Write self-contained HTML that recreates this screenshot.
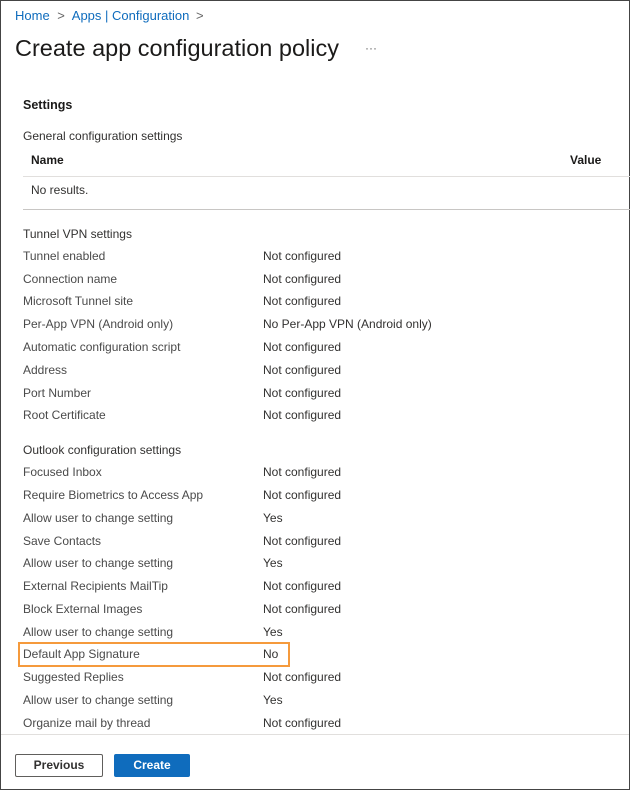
<!DOCTYPE html>
<html><head><meta charset="utf-8"><style>
*{margin:0;padding:0;box-sizing:border-box}
body{width:630px;height:790px;background:#fff;font-family:"Liberation Sans",sans-serif;position:relative;overflow:hidden;}
.t{position:absolute;font-size:12px;line-height:14px;white-space:nowrap;color:#323130}
.l{color:#4a4a4a}
.h{color:#1b1a19}
.ln{position:absolute;height:1px;background:#e1dfdd}
</style></head><body>
<div style="position:absolute;left:0;top:0;width:630px;height:790px;border:1px solid #444;pointer-events:none"></div>
<div class="t" style="left:15px;top:9px;font-size:13px;color:#0f6cbd">Home <span style="color:#666;margin:0 4px">&gt;</span> Apps | Configuration <span style="color:#666;margin-left:3px">&gt;</span></div>
<div class="t h" style="left:15px;top:34px;font-size:23.5px;line-height:28px">Create app configuration policy</div>
<div class="t" style="left:365px;top:41px;color:#666">···</div>
<div class="t h" style="left:23px;top:98px;font-size:12.5px;font-weight:bold">Settings</div>
<div class="t" style="left:23px;top:129px">General configuration settings</div>
<div class="t h" style="left:31px;top:153px;font-weight:bold">Name</div>
<div class="t h" style="left:570px;top:153px;font-weight:bold">Value</div>
<div class="ln" style="left:23px;top:176px;width:607px"></div>
<div class="t" style="left:31px;top:183px">No results.</div>
<div class="ln" style="left:23px;top:209px;width:607px;background:#c8c6c4"></div>
<div class="t" style="left:23px;top:227px">Tunnel VPN settings</div>
<div class="t" style="left:23px;top:443px">Outlook configuration settings</div>
<div id="r"></div>
<div style="position:absolute;left:18px;top:642px;width:272px;height:25px;border:2px solid #f59a3c"></div>
<div class="ln" style="left:1px;top:734px;width:628px"></div>
<div style="position:absolute;left:15px;top:754px;width:88px;height:23px;border:1px solid #605e5c;border-radius:2px;font-size:12px;font-weight:bold;text-align:center;line-height:21px;color:#323130">Previous</div>
<div style="position:absolute;left:114px;top:754px;width:76px;height:23px;background:#0f6cbd;border-radius:2px;font-size:12px;font-weight:bold;text-align:center;line-height:23px;color:#fff">Create</div>
<script>
var rows=[[256,"Tunnel enabled","Not configured"],[279,"Connection name","Not configured"],[301,"Microsoft Tunnel site","Not configured"],[324,"Per-App VPN (Android only)","No Per-App VPN (Android only)"],[347,"Automatic configuration script","Not configured"],[370,"Address","Not configured"],[393,"Port Number","Not configured"],[415,"Root Certificate","Not configured"],
[472,"Focused Inbox","Not configured"],[495,"Require Biometrics to Access App","Not configured"],[518,"Allow user to change setting","Yes"],[541,"Save Contacts","Not configured"],[563,"Allow user to change setting","Yes"],[586,"External Recipients MailTip","Not configured"],[609,"Block External Images","Not configured"],[632,"Allow user to change setting","Yes"],[654,"Default App Signature","No"],[677,"Suggested Replies","Not configured"],[700,"Allow user to change setting","Yes"],[723,"Organize mail by thread","Not configured"]];
var h="";rows.forEach(function(r){h+='<div class="t l" style="left:23px;top:'+(r[0]-7)+'px">'+r[1]+'</div><div class="t" style="left:263px;top:'+(r[0]-7)+'px">'+r[2]+'</div>';});
document.getElementById("r").innerHTML=h;
</script>
</body></html>
